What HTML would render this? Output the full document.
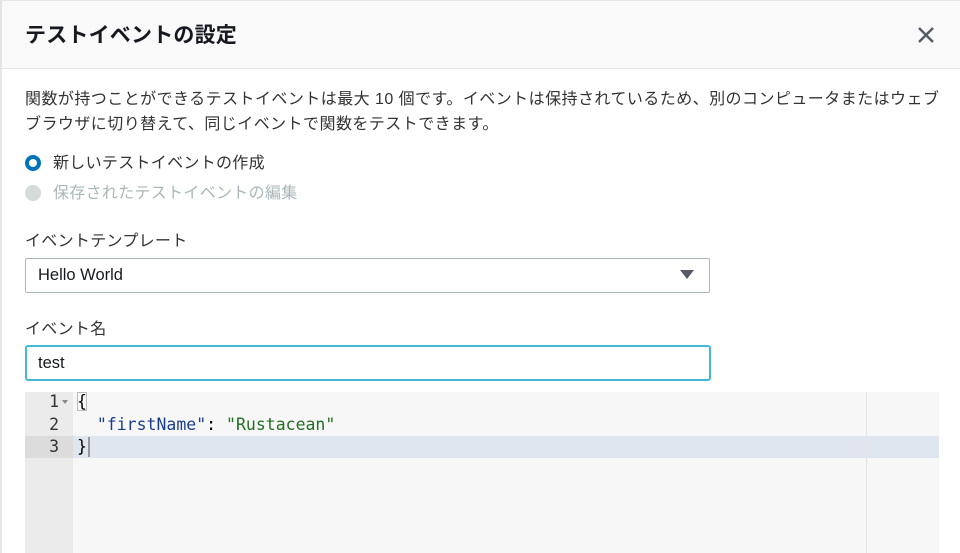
<!DOCTYPE html>
<html><head><meta charset="utf-8"><style>
*{margin:0;padding:0;box-sizing:border-box}
body{width:960px;height:553px;overflow:hidden;background:#fff;font-family:"Liberation Sans","Noto Sans CJK JP",sans-serif;color:#16191f;position:relative}
.abs{position:absolute}
.hdr{left:0;top:0;width:960px;height:69px;background:#f9f9f9;border-top:1px solid #e8e8e8;border-bottom:1px solid #e6e6e6;border-left:2px solid #e4e4e4}
.lb{left:0;top:69px;width:2px;height:484px;background:#e8e8e8}
.title{left:25px;top:19px;font-size:21px;font-weight:bold;color:#16191f;letter-spacing:0.2px}
.x{left:917px;top:26px}
.desc{left:25px;top:87px;font-size:16px;line-height:25px;color:#333;letter-spacing:0.45px;white-space:nowrap}
.radio{width:16px;height:16px;border-radius:50%}
.t15{font-size:16px;color:#333;white-space:nowrap;letter-spacing:0.3px}
.sel{left:25px;top:258px;width:685px;height:35px;border:1px solid #aab7b8;border-radius:2px;font-size:16.5px;padding:7px 12px;color:#16191f}
.inp{left:25px;top:345px;width:686px;height:36px;border:2px solid #44b9d6;border-radius:3px;font-size:16.5px;padding:7px 11px;color:#16191f}
.ed{left:25px;top:392px;width:914px;height:161px;background:#f7f7f7}
.gut{left:25px;top:392px;width:48px;height:161px;background:#ebebeb}
.code{font-family:"DejaVu Sans Mono","Liberation Mono",monospace;font-size:16.5px;line-height:22.5px}
</style></head><body>
<div class="abs hdr"></div>
<div class="abs lb"></div>
<div class="abs title">テストイベントの設定</div>
<svg class="abs x" width="18" height="18" viewBox="0 0 18 18"><path d="M2 2L16 16M16 2L2 16" stroke="#545b64" stroke-width="2.4"/></svg>
<div class="abs desc">関数が持つことができるテストイベントは最大 10 個です。イベントは保持されているため、別のコンピュータまたはウェブ<br>ブラウザに切り替えて、同じイベントで関数をテストできます。</div>
<div class="abs radio" style="left:25px;top:155px;background:#fff;border:4.5px solid #0073bb"></div>
<div class="abs t15" style="left:53px;top:149px">新しいテストイベントの作成</div>
<div class="abs radio" style="left:25px;top:185px;background:#d5dbdb"></div>
<div class="abs t15" style="left:53px;top:179px;color:#aab7b8">保存されたテストイベントの編集</div>
<div class="abs t15" style="left:25px;top:227px">イベントテンプレート</div>
<div class="abs sel">Hello World</div>
<svg class="abs" style="left:680px;top:270px" width="14" height="10"><path d="M0 0H14L7 9Z" fill="#545b64"/></svg>
<div class="abs t15" style="left:25px;top:315px">イベント名</div>
<div class="abs inp">test</div>
<div class="abs ed"></div>
<div class="abs gut"></div>
<div class="abs" style="left:25px;top:436px;width:914px;height:22px;background:#e0e6ef"></div>
<div class="abs" style="left:25px;top:436px;width:48px;height:22px;background:#dcdcdc"></div>
<div class="abs" style="left:866px;top:392px;width:1px;height:161px;background:#e4e4e4"></div>
<div class="abs code" style="left:25px;top:391px;width:34px;text-align:right;color:#333">1<br>2<br>3</div>
<svg class="abs" style="left:62px;top:400px" width="6" height="4"><path d="M0 0H6L3 4Z" fill="#888"/></svg>
<div class="abs code" style="left:77px;top:391px;color:#000;white-space:pre"><span style="outline:1px solid #bbb;outline-offset:-1px">{</span>
  <span style="color:#1a3d8f">"firstName"</span>: <span style="color:#236e25">"Rustacean"</span>
}</div>
<div class="abs" style="left:88px;top:437px;width:2px;height:20px;background:#999"></div>
</body></html>
